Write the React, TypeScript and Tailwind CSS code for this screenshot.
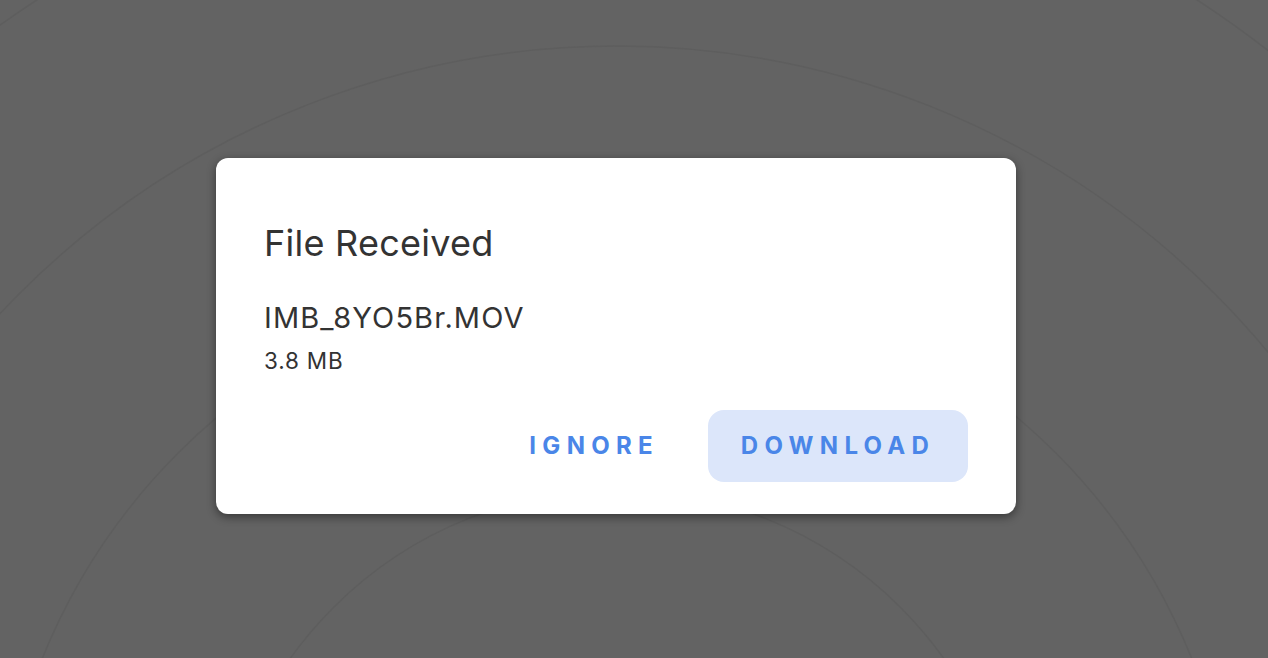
const rings = [401, 620, 845, 1063];

function Ripples() {
  return (
    <svg className="absolute inset-0 h-full w-full" viewBox="0 0 1268 658" preserveAspectRatio="none">
      {rings.map((r) => (
        <circle key={r} cx={617} cy={891} r={r} fill="none" stroke="#5e5e5e" strokeWidth={1.5} />
      ))}
    </svg>
  );
}

export default function App() {
  return (
    <div className="relative h-screen w-full overflow-hidden bg-[#636363] font-['Inter',sans-serif]">
      <Ripples />
      <div className="relative pl-[216px] pt-[158px]">
        <div className="flex w-[800px] flex-col rounded-[12px] bg-white px-12 pb-8 pt-[63px] shadow-[0_3px_10px_rgba(0,0,0,0.45)]">
          <h2 className="text-[36px] leading-[44px] font-normal tracking-[0.25px] text-[#333333]">File Received</h2>
          <div className="mt-[36px] text-[29px] leading-[34px] tracking-[1.1px] text-[#333333]">IMB_8YO5Br.MOV</div>
          <div className="mt-[12px] text-[22.5px] leading-[28px] tracking-[0.8px] text-[#333333]">3.8 MB</div>
          <div className="mt-[35px] flex items-center justify-end gap-[17px]">
            <button className="flex h-[72px] items-center rounded-[16px] px-8 text-[24px] font-bold tracking-[6.3px] text-[#4a86e8]">
              IGNORE
            </button>
            <button className="flex h-[72px] w-[260px] items-center justify-center rounded-[16px] bg-[#dce6fa] text-[24px] font-bold tracking-[6.3px] text-[#4a86e8]">
              DOWNLOAD
            </button>
          </div>
        </div>
      </div>
    </div>
  );
}
